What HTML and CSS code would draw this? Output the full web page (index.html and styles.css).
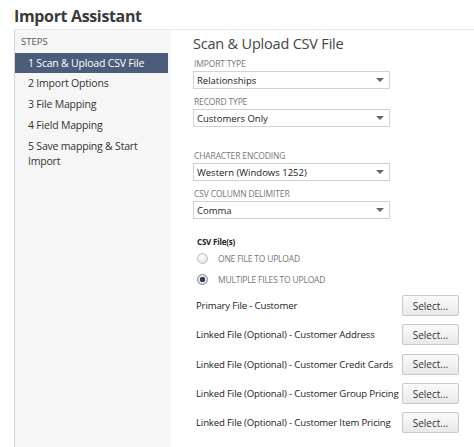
FILE: index.html
```html
<!DOCTYPE html>
<html lang="en">
<head>
<meta charset="utf-8">
<title>Import Assistant</title>
<link rel="stylesheet" href="styles.css">
</head>
<body>
<div class="page">
  <h1 class="page-title">Import Assistant</h1>
  <div class="layout">
    <nav class="steps">
      <div class="steps-head">STEPS</div>
      <ul class="step-list">
        <li class="step active">1 Scan &amp; Upload CSV File</li>
        <li class="step">2 Import Options</li>
        <li class="step">3 File Mapping</li>
        <li class="step">4 Field Mapping</li>
        <li class="step">5 Save mapping &amp; Start Import</li>
      </ul>
    </nav>
    <main class="content">
      <h2 class="content-title">Scan &amp; Upload CSV File</h2>

      <div class="field">
        <label class="field-label">IMPORT TYPE</label>
        <div class="select"><span>Relationships</span><i class="caret"></i></div>
      </div>
      <div class="field">
        <label class="field-label">RECORD TYPE</label>
        <div class="select"><span>Customers Only</span><i class="caret"></i></div>
      </div>

      <div class="field field-spaced">
        <label class="field-label">CHARACTER ENCODING</label>
        <div class="select"><span>Western (Windows 1252)</span><i class="caret"></i></div>
      </div>
      <div class="field">
        <label class="field-label">CSV COLUMN DELIMITER</label>
        <div class="select"><span>Comma</span><i class="caret"></i></div>
      </div>

      <div class="files-head">CSV File(s)</div>
      <div class="radio-row"><span class="radio"></span>ONE FILE TO UPLOAD</div>
      <div class="radio-row"><span class="radio checked"></span>MULTIPLE FILES TO UPLOAD</div>

      <div class="file-list">
        <div class="file-row"><span>Primary File - Customer</span><button class="btn">Select...</button></div>
        <div class="file-row"><span>Linked File (Optional) - Customer Address</span><button class="btn">Select...</button></div>
        <div class="file-row"><span>Linked File (Optional) - Customer Credit Cards</span><button class="btn">Select...</button></div>
        <div class="file-row"><span>Linked File (Optional) - Customer Group Pricing</span><button class="btn">Select...</button></div>
        <div class="file-row"><span>Linked File (Optional) - Customer Item Pricing</span><button class="btn">Select...</button></div>
      </div>
    </main>
  </div>
</div>
</body>
</html>
```
FILE: styles.css
```css
html, body {
  margin: 0;
  background: #fff;
  font-family: "Open Sans", "Noto Sans", sans-serif;
  color: #333;
}

.page {
  padding: 4px 0 0 14px;
  height: 443px;
  overflow: hidden;
}

.page-title {
  margin: 0;
  font-size: 16px;
  font-weight: 700;
  line-height: 25px;
  color: #3b3b3b;
  letter-spacing: -0.35px;
}

.layout {
  display: grid;
  grid-template-columns: 157px 1fr;
  border-top: 1px solid #e8e8e8;
  height: 417px;
}

/* left step navigation */
.steps {
  background: #f6f6f6;
  border-left: 1px solid #d6d6d6;
}

.steps-head {
  font-size: 9.5px;
  line-height: 12px;
  color: #555;
  padding: 6px 0 5px 6px;
}

.step-list {
  list-style: none;
  margin: 0;
  padding: 0;
  width: 153px;
}

.step {
  font-size: 10.5px;
  letter-spacing: -0.2px;
  line-height: 15px;
  color: #333;
  padding: 3px 10px 3px 13px;
}

.step.active {
  background: #4b5d7a;
  color: #fff;
  padding-top: 3px;
  padding-bottom: 2px;
  white-space: nowrap;
}

/* form column */
.content {
  padding: 4px 0 0 22px;
}

.content-title {
  margin: 0 0 4px;
  font-size: 14.5px;
  font-weight: 400;
  letter-spacing: -0.2px;
  line-height: 20px;
  color: #444;
}

.field {
  margin-top: 7px;
  width: 197px;
}

.field:first-of-type {
  margin-top: 0;
}

.field-spaced {
  margin-top: 23px;
}

.field-label {
  display: block;
  font-size: 8.5px;
  letter-spacing: -0.15px;
  line-height: 12px;
  color: #777;
  margin-bottom: 1px;
  padding-left: 1px;
}

.select {
  display: flex;
  align-items: center;
  justify-content: space-between;
  height: 16px;
  border: 1px solid #d2d2d2;
  background: #fff;
  padding: 0 5px 0 3px;
  font-size: 9.5px;
  color: #222;
}

.caret {
  width: 0;
  height: 0;
  border-left: 4px solid transparent;
  border-right: 4px solid transparent;
  border-top: 4px solid #666;
}

.files-head {
  margin-top: 17px;
  padding-left: 4px;
  font-size: 8px;
  font-weight: 700;
  letter-spacing: -0.2px;
  line-height: 12px;
  color: #222;
}

.radio-row {
  display: flex;
  align-items: center;
  gap: 10px;
  height: 21px;
  padding-left: 4px;
  font-size: 8.5px;
  letter-spacing: -0.2px;
  color: #777;
}

.radio {
  width: 9px;
  height: 9px;
  border-radius: 50%;
  border: 1px solid #bdbdbd;
  background: radial-gradient(circle at 40% 35%, #fff, #ddd);
}

.radio.checked {
  border-color: #888;
  background: radial-gradient(circle, #2c3e5a 0 2.5px, #e6e6e6 3px, #cfcfcf);
}

.file-list {
  width: 266px;
  padding-top: 1px;
}

.file-row {
  display: flex;
  align-items: center;
  justify-content: space-between;
  height: 29.3px;
  padding-left: 3px;
  font-size: 9.6px;
  letter-spacing: -0.15px;
  white-space: nowrap;
  color: #222;
}

.btn {
  flex-shrink: 0;
  width: 57px;
  height: 21px;
  border: 1px solid #c9c9c9;
  border-radius: 2px;
  background: linear-gradient(#fafafa, #e9e9e9);
  font-family: "Open Sans", "Noto Sans", sans-serif;
  font-size: 10px;
  color: #333;
  padding: 0;
}
```
